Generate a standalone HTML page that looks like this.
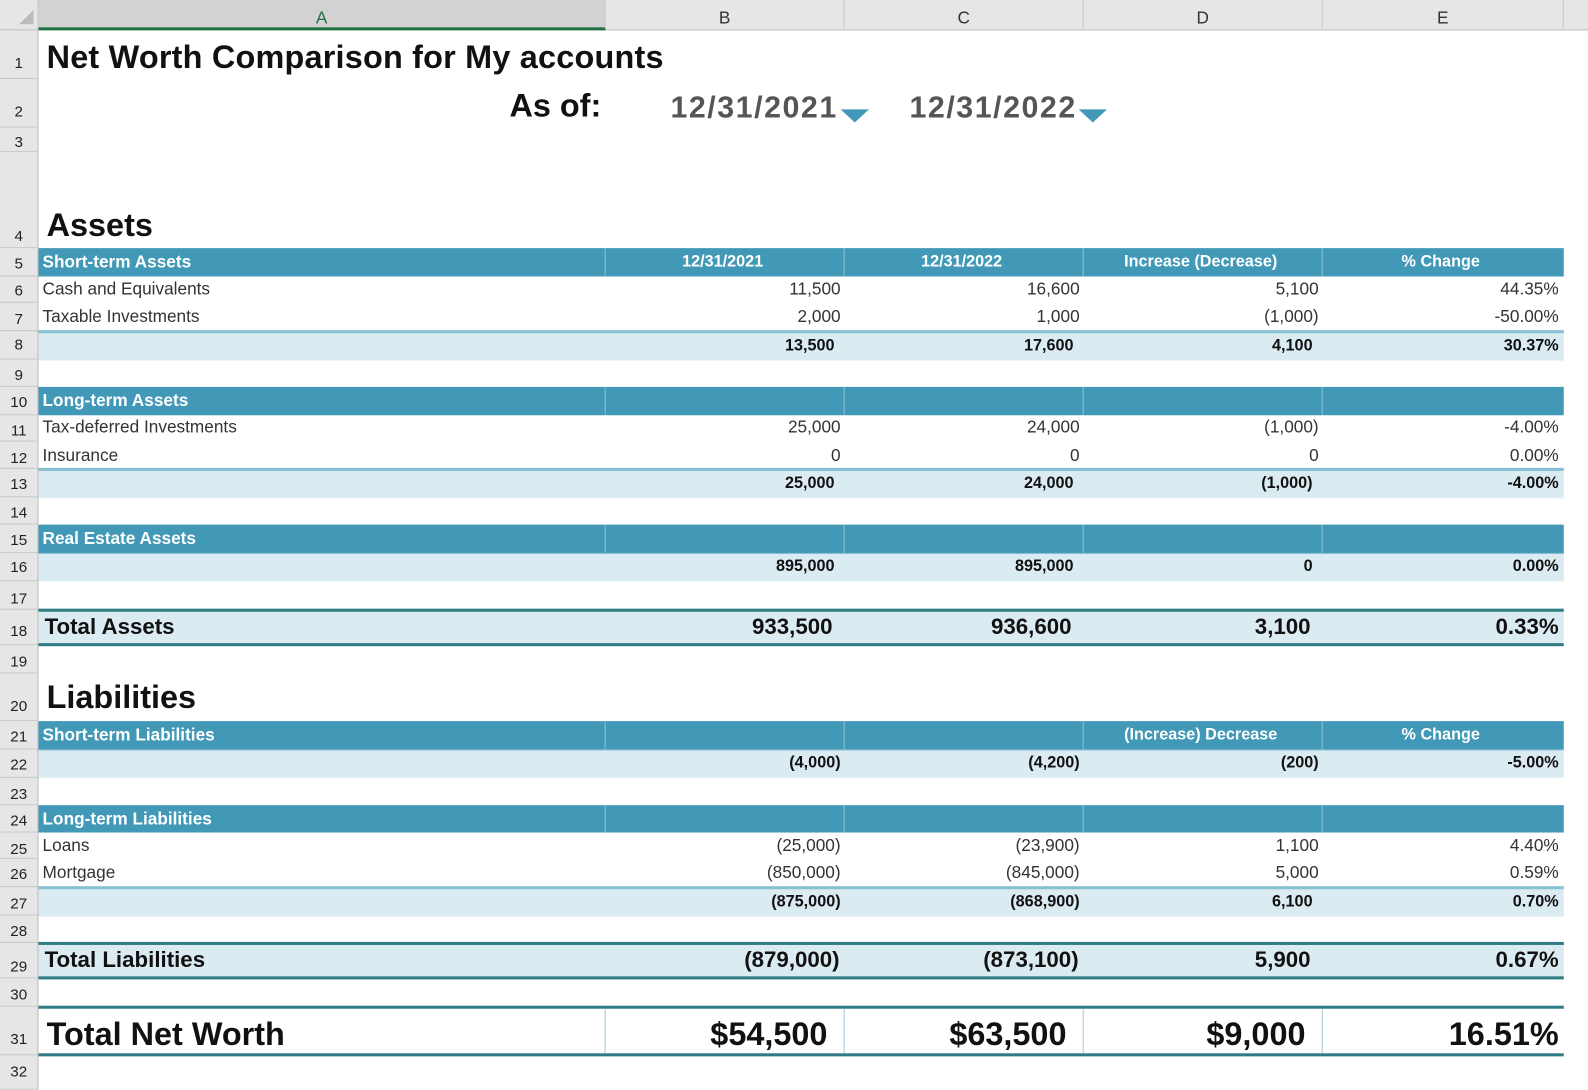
<!DOCTYPE html>
<html><head><meta charset="utf-8"><style>
*{margin:0;padding:0;box-sizing:border-box}
body{width:1588px;height:1076px;background:#fff;position:relative;overflow:hidden;font-family:"Liberation Sans",sans-serif;color:#111}
#w{position:absolute;left:0;top:0;width:1568px;height:1062px;transform:scale(1.0128);transform-origin:0 0}
.colhdr{position:absolute;top:0;left:0;width:1570px;height:30px;background:#e6e6e6;border-bottom:1px solid #bdbdbd}
.ch{position:absolute;top:0;height:30px;border-right:1px solid #c8c8c8;text-align:center;font-size:17px;line-height:36px;color:#333}
.rowhdr{position:absolute;top:30px;left:0;width:38px;height:1046px;background:#e6e6e6;border-right:1px solid #bdbdbd}
.rn{position:absolute;left:0;width:37px;border-bottom:1px solid #c9c9c9;font-size:15px;text-align:center;color:#222}
.r{position:absolute;left:38px;width:1506px;display:flex}
.r>div{height:100%;white-space:nowrap;overflow:visible}
.a{width:560px;padding-left:4px}.b,.c,.d{width:236px;text-align:right;padding-right:4px}.e{width:238px;text-align:right;padding-right:5px}
.hd{background:#4199b7;color:#fff;font-size:17px;line-height:28px;font-weight:bold}
.hd>div{border-right:1px solid #8cc3d6}
.hd .b,.hd .c,.hd .d,.hd .e{text-align:center;font-size:16px}
.lt{font-size:17px;color:#333;line-height:28px}
.sub{background:#daebf2;border-top:3px solid #86c0d3;font-size:16px;font-weight:bold;line-height:26px}
.sub .b,.sub .c,.sub .d{padding-right:10px}
.tot{background:#daebf2;border-top:3px solid #2f7b83;border-bottom:3px solid #2f7b83;font-weight:bold;font-size:22px;line-height:30px}
.tot .b,.tot .c,.tot .d{padding-right:12px}
</style></head><body><div id="w">
<div class="colhdr">
<div class="ch" style="left:0;width:38px"><svg width="38" height="30"><polygon points="33,10 33,24 19,24" fill="#bbb"/></svg></div>
<div class="ch" style="left:38px;width:560px;background:#d2d2d2;border-bottom:3px solid #217346;color:#217346">A</div>
<div class="ch" style="left:598px;width:236px">B</div>
<div class="ch" style="left:834px;width:236px">C</div>
<div class="ch" style="left:1070px;width:236px">D</div>
<div class="ch" style="left:1306px;width:238px">E</div>
</div>
<div class="rowhdr">
<div class="rn" style="top:0;height:48px;line-height:66px">1</div>
<div class="rn" style="top:48px;height:48px;line-height:66px">2</div>
<div class="rn" style="top:96px;height:24px;line-height:30px">3</div>
<div class="rn" style="top:120px;height:95px;line-height:168px">4</div>
<div class="rn" style="top:215px;height:28px;line-height:32px">5</div>
<div class="rn" style="top:243px;height:26px;line-height:30px">6</div>
<div class="rn" style="top:269px;height:28px;line-height:34px">7</div>
<div class="rn" style="top:297px;height:28px;line-height:28px">8</div>
<div class="rn" style="top:325px;height:27px;line-height:32px">9</div>
<div class="rn" style="top:352px;height:28px;line-height:32px">10</div>
<div class="rn" style="top:380px;height:26px;line-height:32px">11</div>
<div class="rn" style="top:406px;height:27px;line-height:34px">12</div>
<div class="rn" style="top:433px;height:28px;line-height:32px">13</div>
<div class="rn" style="top:461px;height:27px;line-height:32px">14</div>
<div class="rn" style="top:488px;height:28px;line-height:32px">15</div>
<div class="rn" style="top:516px;height:28px;line-height:30px">16</div>
<div class="rn" style="top:544px;height:28px;line-height:36px">17</div>
<div class="rn" style="top:572px;height:35px;line-height:44px">18</div>
<div class="rn" style="top:607px;height:28px;line-height:34px">19</div>
<div class="rn" style="top:635px;height:47px;line-height:66px">20</div>
<div class="rn" style="top:682px;height:28px;line-height:32px">21</div>
<div class="rn" style="top:710px;height:28px;line-height:32px">22</div>
<div class="rn" style="top:738px;height:27px;line-height:34px">23</div>
<div class="rn" style="top:765px;height:27px;line-height:32px">24</div>
<div class="rn" style="top:792px;height:26px;line-height:34px">25</div>
<div class="rn" style="top:818px;height:28px;line-height:32px">26</div>
<div class="rn" style="top:846px;height:28px;line-height:34px">27</div>
<div class="rn" style="top:874px;height:27px;line-height:32px">28</div>
<div class="rn" style="top:901px;height:35px;line-height:48px">29</div>
<div class="rn" style="top:936px;height:28px;line-height:34px">30</div>
<div class="rn" style="top:964px;height:48px;line-height:66px">31</div>
<div class="rn" style="top:1012px;height:34px;line-height:34px">32</div>
</div>

<div style="position:absolute;left:46px;top:38px;font-size:32px;font-weight:bold;letter-spacing:0.2px">Net Worth Comparison for My accounts</div>
<div style="position:absolute;left:503px;top:86px;font-size:32px;font-weight:bold">As of:</div>
<div style="position:absolute;left:662px;top:90px;font-size:30px;color:#555;font-weight:bold;letter-spacing:1.5px">12/31/2021</div>
<svg style="position:absolute;left:830px;top:106px" width="30" height="16"><polygon points="0,2 28,2 14,15" fill="#4199b7"/></svg>
<div style="position:absolute;left:898px;top:90px;font-size:30px;color:#555;font-weight:bold;letter-spacing:1.5px">12/31/2022</div>
<svg style="position:absolute;left:1065px;top:106px" width="30" height="16"><polygon points="0,2 28,2 14,15" fill="#4199b7"/></svg>
<div style="position:absolute;left:46px;top:204px;font-size:32px;font-weight:bold">Assets</div>

<div class="r hd" style="top:245px;height:28px"><div class="a">Short-term Assets</div><div class="b">12/31/2021</div><div class="c">12/31/2022</div><div class="d">Increase (Decrease)</div><div class="e" style="border:0">% Change</div></div>
<div class="r lt" style="top:272px;height:26px"><div class="a">Cash and Equivalents</div><div class="b">11,500</div><div class="c">16,600</div><div class="d">5,100</div><div class="e">44.35%</div></div>
<div class="r lt" style="top:299px;height:28px"><div class="a">Taxable Investments</div><div class="b">2,000</div><div class="c">1,000</div><div class="d">(1,000)</div><div class="e">-50.00%</div></div>
<div class="r sub" style="top:326px;height:30px"><div class="a"></div><div class="b">13,500</div><div class="c">17,600</div><div class="d">4,100</div><div class="e">30.37%</div></div>

<div class="r hd" style="top:382px;height:28px"><div class="a">Long-term Assets</div><div class="b"></div><div class="c"></div><div class="d"></div><div class="e" style="border:0"></div></div>
<div class="r lt" style="top:408px;height:26px"><div class="a">Tax-deferred Investments</div><div class="b">25,000</div><div class="c">24,000</div><div class="d">(1,000)</div><div class="e">-4.00%</div></div>
<div class="r lt" style="top:436px;height:27px"><div class="a">Insurance</div><div class="b">0</div><div class="c">0</div><div class="d">0</div><div class="e">0.00%</div></div>
<div class="r sub" style="top:462px;height:30px"><div class="a"></div><div class="b">25,000</div><div class="c">24,000</div><div class="d">(1,000)</div><div class="e">-4.00%</div></div>

<div class="r hd" style="top:518px;height:28px"><div class="a">Real Estate Assets</div><div class="b"></div><div class="c"></div><div class="d"></div><div class="e" style="border:0"></div></div>
<div class="r sub" style="top:546px;height:28px;border-top:1px solid #86c0d3"><div class="a"></div><div class="b">895,000</div><div class="c">895,000</div><div class="d">0</div><div class="e">0.00%</div></div>

<div class="r tot" style="top:601px;height:37px"><div class="a" style="padding-left:6px">Total Assets</div><div class="b">933,500</div><div class="c">936,600</div><div class="d">3,100</div><div class="e">0.33%</div></div>

<div style="position:absolute;left:46px;top:670px;font-size:32px;font-weight:bold">Liabilities</div>

<div class="r hd" style="top:712px;height:28px"><div class="a">Short-term Liabilities</div><div class="b"></div><div class="c"></div><div class="d">(Increase) Decrease</div><div class="e" style="border:0">% Change</div></div>
<div class="r sub" style="top:740px;height:28px;border-top:1px solid #86c0d3"><div class="a"></div><div class="b" style="padding-right:4px">(4,000)</div><div class="c" style="padding-right:4px">(4,200)</div><div class="d" style="padding-right:4px">(200)</div><div class="e">-5.00%</div></div>

<div class="r hd" style="top:795px;height:27px"><div class="a">Long-term Liabilities</div><div class="b"></div><div class="c"></div><div class="d"></div><div class="e" style="border:0"></div></div>
<div class="r lt" style="top:821px;height:26px"><div class="a">Loans</div><div class="b">(25,000)</div><div class="c">(23,900)</div><div class="d">1,100</div><div class="e">4.40%</div></div>
<div class="r lt" style="top:848px;height:28px"><div class="a">Mortgage</div><div class="b">(850,000)</div><div class="c">(845,000)</div><div class="d">5,000</div><div class="e">0.59%</div></div>
<div class="r sub" style="top:875px;height:30px"><div class="a"></div><div class="b" style="padding-right:4px">(875,000)</div><div class="c" style="padding-right:4px">(868,900)</div><div class="d">6,100</div><div class="e">0.70%</div></div>

<div class="r tot" style="top:930px;height:37px"><div class="a" style="padding-left:6px">Total Liabilities</div><div class="b" style="padding-right:5px">(879,000)</div><div class="c" style="padding-right:5px">(873,100)</div><div class="d">5,900</div><div class="e">0.67%</div></div>

<div class="r" style="top:993px;height:50px;border-top:3px solid #2f7b83;border-bottom:3px solid #2f7b83;font-weight:bold;font-size:32px;line-height:50px">
<div class="a" style="padding-left:8px;border-right:1px solid #9cc9d8">Total Net Worth</div>
<div class="b" style="padding-right:16px;border-right:1px solid #9cc9d8">$54,500</div>
<div class="c" style="padding-right:16px;border-right:1px solid #9cc9d8">$63,500</div>
<div class="d" style="padding-right:16px;border-right:1px solid #9cc9d8">$9,000</div>
<div class="e">16.51%</div>
</div>
</div></body></html>
